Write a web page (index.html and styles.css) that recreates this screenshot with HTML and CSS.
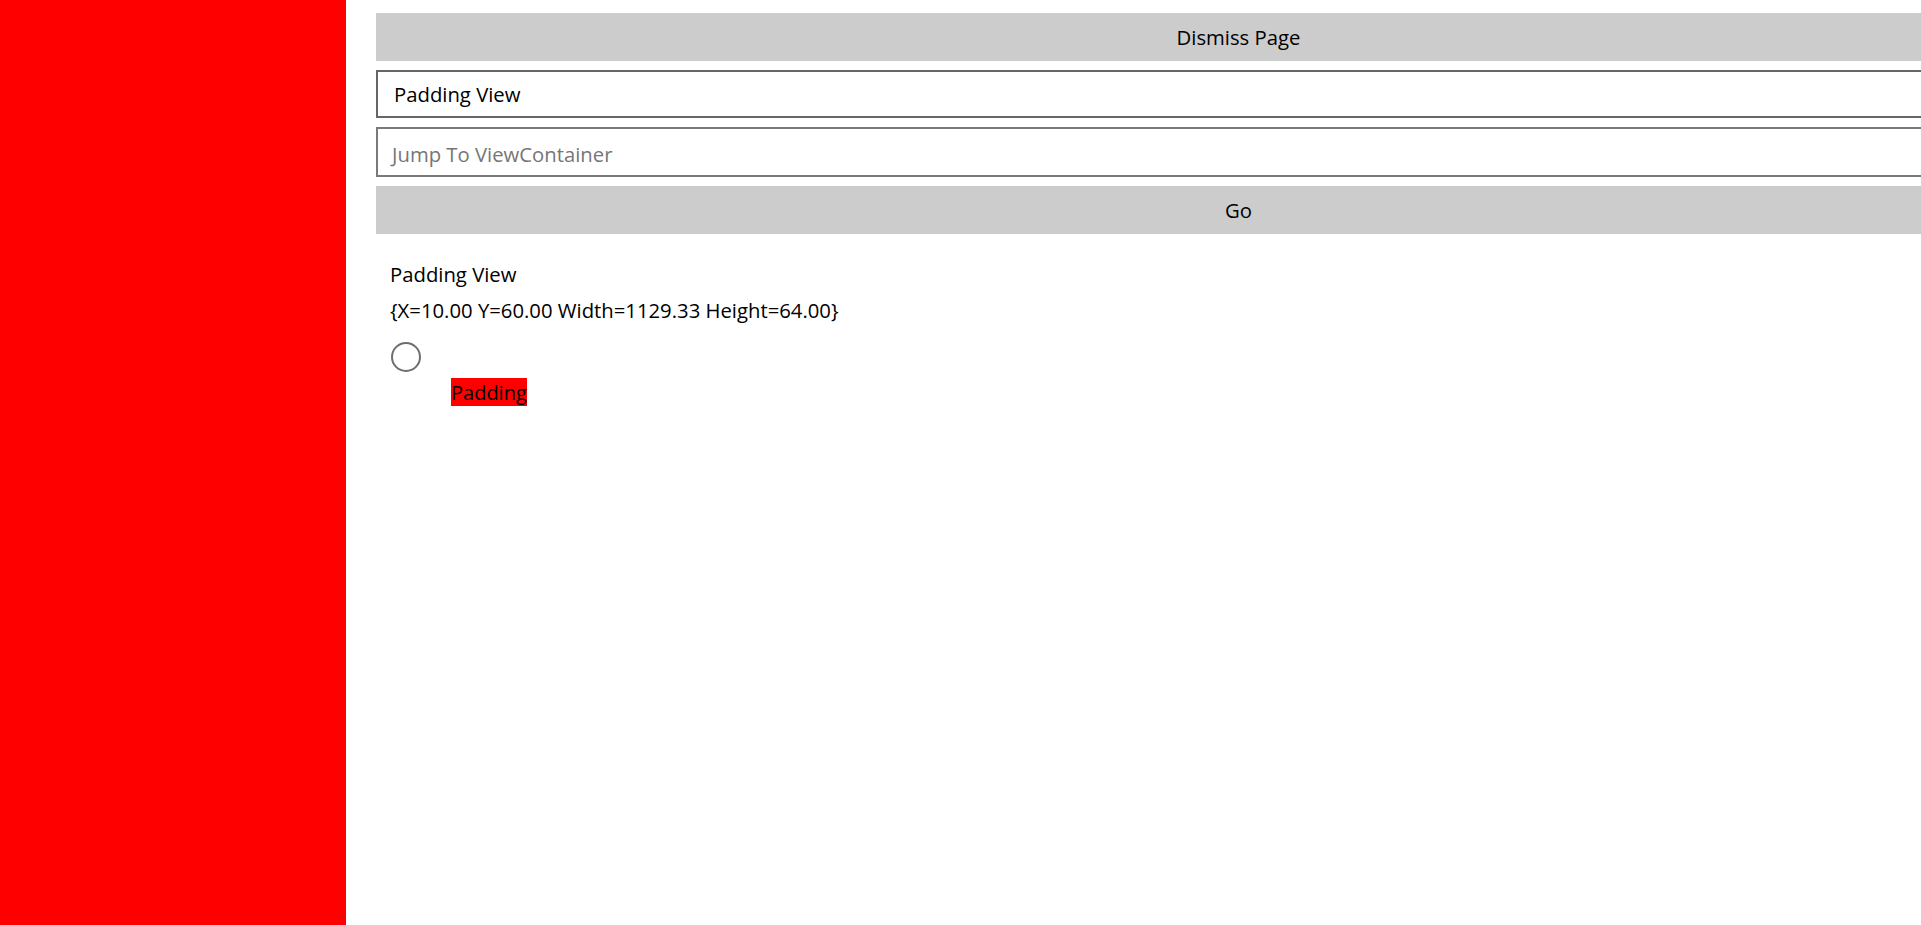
FILE: index.html
```html
<!DOCTYPE html>
<html lang="en">
<head>
<meta charset="utf-8">
<title>Padding View</title>
<link rel="stylesheet" href="styles.css">
</head>
<body>
<div class="app">
  <aside class="sidebar"></aside>
  <main class="page">
    <div class="controls">
      <button class="btn">Dismiss Page</button>
      <div class="entry entry-value">Padding View</div>
      <div class="entry entry-placeholder">Jump To ViewContainer</div>
      <button class="btn">Go</button>
    </div>
    <section class="content">
      <div class="label">Padding View</div>
      <div class="label">{X=10.00 Y=60.00 Width=1129.33 Height=64.00}</div>
      <div class="radio"></div>
      <div class="padded"><span class="padding-box">Padding</span></div>
    </section>
  </main>
</div>
</body>
</html>
```

FILE: styles.css
```css
html, body {
  margin: 0;
  padding: 0;
  background: #ffffff;
  overflow: hidden;
}

body {
  font-family: "Open Sans", "Noto Sans", sans-serif;
  font-size: 20.3px;
  color: #000000;
}

.app {
  display: flex;
  width: 1921px;
  height: 925px;
  overflow: hidden;
}

.sidebar {
  flex: 0 0 346px;
  background: #ff0000;
}

.page {
  flex: 0 0 auto;
  width: 1725px;
  padding-left: 30px;
  padding-top: 13px;
}

.controls {
  display: flex;
  flex-direction: column;
  gap: 9px;
}

.btn {
  display: block;
  width: 100%;
  height: 48px;
  border: none;
  margin: 0;
  padding: 0;
  background: #cccccc;
  font-family: inherit;
  font-size: 20.3px;
  line-height: 48px;
  color: #000000;
  text-align: center;
}

.entry {
  box-sizing: border-box;
  border: 2px solid #666666;
  background: #ffffff;
}

.entry-value {
  height: 48px;
  line-height: 44px;
  padding-left: 16px;
}

.entry-placeholder {
  height: 50px;
  line-height: 42px;
  padding-top: 4px;
  padding-left: 14px;
  border-color: #7a7a7a;
  color: #767676;
}

.content {
  padding-top: 22px;
  padding-left: 14px;
  display: flex;
  flex-direction: column;
  align-items: flex-start;
}

.label {
  line-height: 36px;
  white-space: nowrap;
}

.radio {
  box-sizing: border-box;
  width: 30px;
  height: 30px;
  margin-top: 14px;
  margin-left: 1px;
  border: 2px solid #6e6e6e;
  border-radius: 50%;
}

.padded {
  margin-top: 6px;
  margin-left: 61px;
}

.padding-box {
  display: inline-block;
  background: #ff0000;
  line-height: 26px;
  padding-top: 2px;
  font-size: 20px;
}
```
